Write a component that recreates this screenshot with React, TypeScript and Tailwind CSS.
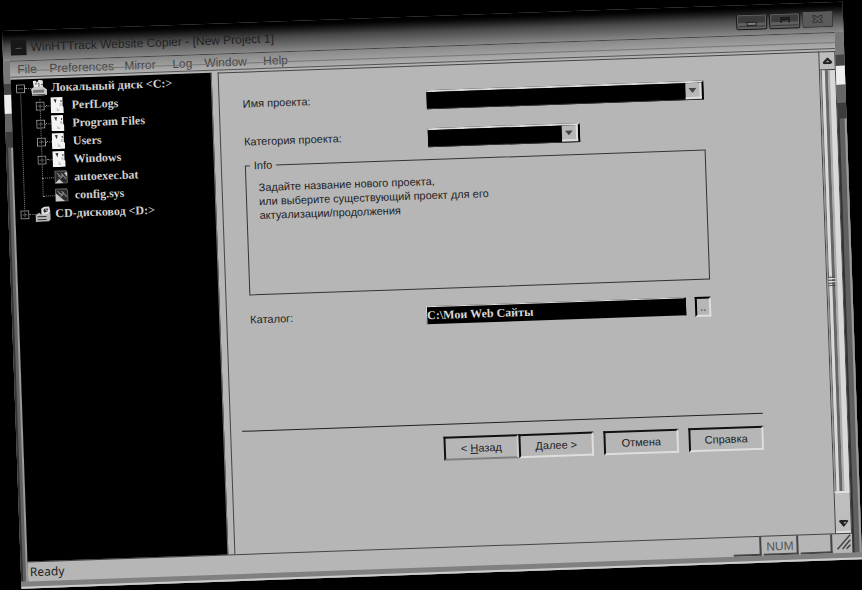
import type { ReactNode } from "react";
import clsx from "clsx";

const MENU = [
  { label: "File", width: "w-8" },
  { label: "Preferences", width: "w-[75px]" },
  { label: "Mirror", width: "w-12" },
  { label: "Log", width: "w-8" },
  { label: "Window", width: "w-[59px]" },
  { label: "Help", width: "w-8" },
];

const FOLDERS = ["PerfLogs", "Program Files", "Users", "Windows"];
const FILES = ["autoexec.bat", "config.sys"];

function Expander({ open = false, label }: { open?: boolean; label: string }) {
  return (
    <button type="button" aria-label={label} className="z-10 flex size-[9px] shrink-0 bg-black">
      <svg viewBox="0 0 9 9" className="size-[9px]" fill="none" stroke="#a0a0a0">
        <rect x=".5" y=".5" width="8" height="8" />
        <path d={open ? "M2 4.5h5" : "M2 4.5h5M4.5 2v5"} stroke="#606060" />
      </svg>
    </button>
  );
}

function DriveIcon({ disc = false }: { disc?: boolean }) {
  return (
    <svg viewBox="0 0 16 16" className="size-4 shrink-0">
      {disc ? (
        <g>
          <path d="M6 6V3l3-2h5l1 5-2 3-7 1z" fill="#ddd" />
          <path d="M8 5 9 3h4l-1 3-3 1z" fill="#333" />
          <path d="m10 4 2 1" stroke="#ccc" />
          <path d="M0 9 4 7l2 2h6l3-2v7l-2 2H0z" fill="#b8b8b8" />
          <path d="M2 11h9M2 14h9" stroke="#333" />
        </g>
      ) : (
        <g>
          <path d="M2 1h3l1 2 2-3 4 1v8H3z" fill="#e6e6e6" />
          <path d="M4 4h2M8 3v5M10 5h2" stroke="#555" />
          <path d="M0 9 3 7h9l4 3v5l-3 1H1z" fill="#c8c8c8" />
          <path d="M2 10h11v3H2z" fill="#777" />
          <path d="M1 15h13" stroke="#444" />
        </g>
      )}
    </svg>
  );
}

function FolderIcon() {
  return (
    <svg viewBox="0 0 13 16" className="h-4 w-[13px] shrink-0">
      <path d="M0 0h12v9l1 1v6H0z" fill="#f4f4f4" />
      <path d="M3 2h3L5 6zM10 3h1v2h-1z" fill="#333" />
      <path d="M9 6h2v3H9zM6 10l3 4H6z" fill="#c4c4c4" />
    </svg>
  );
}

function FileIcon({ config = false }: { config?: boolean }) {
  return (
    <svg viewBox="0 0 14 14" className="size-3.5 shrink-0" fill="none">
      <path d="M1 1h11l1 2v10H1z" fill="#2a2a2a" stroke="#666" />
      <path d={config ? "M1 5v8h9z" : "M1 13l4-4 4 4zM10 3l3 4V2z"} fill="#c8c8c8" />
      <path d="M3 3l5 5M9 4 5 10M7 3l5 6M4 6h5" stroke="#8a8a8a" />
    </svg>
  );
}

function Dots() {
  return <span className="w-1.5 shrink-0 border-t border-dotted border-[#888]" />;
}

function TreePane() {
  return (
    <nav
      aria-label="Disks"
      className="relative w-[201px] shrink-0 border-r border-[#777] bg-black font-['Liberation_Serif','Times_New_Roman',serif] text-xs font-bold text-[#d0d0d0]"
    >
      <span className="absolute top-3 left-[9px] h-32 border-l border-dotted border-[#888]" />
      <span className="absolute top-5 left-7 h-[97px] border-l border-dotted border-[#888]" />
      <ul>
        <li className="flex h-[18px] items-center pl-[5px]">
          <Expander open label="Collapse drive C" />
          <Dots />
          <DriveIcon />
          <span className="pl-1">Локальный диск &lt;C:&gt;</span>
        </li>
        {FOLDERS.map((name) => (
          <li key={name} className="flex h-[18px] items-center pl-6">
            <Expander label={`Expand ${name}`} />
            <Dots />
            <FolderIcon />
            <span className="pl-2">{name}</span>
          </li>
        ))}
        {FILES.map((name) => (
          <li key={name} className="flex h-[18px] items-center pl-7">
            <span className="w-3 border-t border-dotted border-[#888]" />
            <FileIcon config={name === "config.sys"} />
            <span className="pl-1.5">{name}</span>
          </li>
        ))}
        <li className="flex h-[18px] items-center pl-[5px]">
          <Expander label="Expand drive D" />
          <Dots />
          <DriveIcon disc />
          <span className="pl-1">CD-дисковод &lt;D:&gt;</span>
        </li>
      </ul>
    </nav>
  );
}

function Combo({ id, className }: { id: string; className: string }) {
  return (
    <div
      className={clsx(
        "flex h-[19px] border-t-2 border-r-2 border-b border-t-[#d8d8d8] border-r-black border-b-[#333] bg-black",
        className,
      )}
    >
      <div className="relative flex-1">
        <select id={id} className="block h-4 w-full appearance-none bg-black text-[11px] text-[#d0d0d0] outline-none">
          <option></option>
        </select>
        <span className="pointer-events-none absolute top-0 right-0 flex h-4 w-4 items-center justify-center border-r-2 border-b-2 border-[#dedede] bg-[#b8b8b8]">
          <svg viewBox="0 0 8 5" className="h-[5px] w-2">
            <path d="M0 0h8L4 5z" fill="#444" />
          </svg>
        </span>
      </div>
    </div>
  );
}

function WizardButton({ children, focused = false }: { children: ReactNode; focused?: boolean }) {
  return (
    <button
      type="button"
      className={clsx(
        "h-6 w-[75px] border-2 border-t-[#111] border-l-[#111] bg-[#b6b6b6] leading-4",
        focused ? "border-r-[#ccc] border-b-[#808080]" : "border-r-[#dedede] border-b-[#dedede]",
      )}
    >
      {children}
    </button>
  );
}

function WizardForm() {
  return (
    <form className="ml-[11px] w-[521px] pt-6 text-[11px]">
      <div className="pr-12 pl-3">
        <div className="flex h-[38px] items-start justify-between">
          <label htmlFor="project-name" className="leading-[14px]">
            Имя проекта:
          </label>
          <Combo id="project-name" className="w-[277px]" />
        </div>
        <div className="flex h-6 items-start">
          <label htmlFor="project-category" className="w-[184px] leading-[14px]">
            Категория проекта:
          </label>
          <Combo id="project-category" className="w-[152px]" />
        </div>
        <fieldset className="h-[137px] border border-[#333] px-3">
          <legend className="-ml-2 px-1 leading-[14px]">Info</legend>
          <p className="pt-2 leading-[14px]">
            Задайте название нового проекта,
            <br />
            или выберите существующий проект для его
            <br />
            актуализации/продолжения
          </p>
        </fieldset>
        <div className="flex items-start pt-[17px]">
          <label htmlFor="base-path" className="flex-1 leading-[14px]">
            Каталог:
          </label>
          <input
            id="base-path"
            defaultValue="C:\Мои Web Сайты"
            className="h-[18px] w-[260px] border-t border-r-2 border-l border-t-[#e0e0e0] border-r-black border-l-[#e0e0e0] bg-black font-['Liberation_Serif','Times_New_Roman',serif] text-xs font-bold text-[#d8d8d8] outline-none"
          />
          <button
            type="button"
            className="ml-[9px] h-5 w-4 border-2 border-t-black border-r-[#dedede] border-b-[#dedede] border-l-black leading-4"
          >
            ..
          </button>
        </div>
      </div>
      <hr className="mt-[98px] border-[#222]" />
      <div className="flex justify-end gap-2.5 pt-3">
        <div className="flex">
          <WizardButton focused>
            &lt; <u>Н</u>азад
          </WizardButton>
          <WizardButton>
            <u>Д</u>алее &gt;
          </WizardButton>
        </div>
        <WizardButton>Отмена</WizardButton>
        <WizardButton>Справка</WizardButton>
      </div>
    </form>
  );
}

function ScrollBar() {
  return (
    <div className="flex w-[17px] shrink-0 flex-col border-x border-t border-x-[#444] border-t-[#444] bg-[#bebebe]">
      <button type="button" aria-label="Scroll up" className="flex h-[18px] items-center justify-center border-b border-[#333]">
        <svg viewBox="0 0 10 7" className="h-[7px] w-2.5">
          <path d="M5 0 10 5 8 7H1L0 5z" fill="#222" />
          <path d="M5 3 7 5H3z" fill="#999" />
        </svg>
      </button>
      <div className="flex flex-1 items-stretch border-b-2 border-[#e0e0e0]">
        <span className="w-px bg-[#999]" />
        <span className="w-px bg-[#666]" />
        <span className="w-[3px] bg-[#d8d8d8]" />
        <span className="flex w-[3px] items-center bg-[#666]">
          <svg viewBox="0 0 10 10" className="-ml-1 h-2.5 w-2.5 shrink-0" stroke="#444" fill="none">
            <path d="M0 1h10M0 4h10M0 7h10M0 9.500h10" />
            <path d="M0 2.500h10M0 5.500h10" stroke="#ddd" />
          </svg>
        </span>
        <span className="w-0.5 bg-[#aaa]" />
        <span className="flex-1 bg-[#d8d8d8]" />
      </div>
      <button
        type="button"
        aria-label="Scroll down"
        className="flex h-10 items-end justify-center border-b-2 border-[#dedede] pb-1"
      >
        <svg viewBox="0 0 10 7" className="h-[7px] w-2.5">
          <path d="M0 1 2 0h6l2 1-5 6z" fill="#222" />
          <path d="M5 2h3L6 4z" fill="#aaa" />
        </svg>
      </button>
    </div>
  );
}

function CaptionButton({ kind }: { kind: "Minimize" | "Maximize" | "Close" }) {
  return (
    <button
      type="button"
      aria-label={kind}
      className={clsx(
        "flex h-4 w-[31px] items-center justify-center rounded-xs border",
        kind === "Close" ? "border-[#333] border-t-transparent bg-[#5a5a5a]" : "border-[#181818] bg-[#606060]",
      )}
    >
      <svg viewBox="0 0 29 14" className="h-3.5 w-[29px]" fill="none">
        {kind !== "Close" && <path d="M1 1h27v6H1z" fill="#3c3c3c" />}
        {kind !== "Close" && <path d="M1 7.500h27M1 11.500h27" stroke="#383838" />}
        {kind === "Minimize" && <path d="M10 7.500h9v3h-9z" fill="#808080" stroke="#222" />}
        {kind === "Maximize" && <path d="M11 9V4h8v5M12 6h6" stroke="#181818" strokeWidth="1.500" />}
        {kind === "Close" && (
          <path
            d="M10 3h2l2.500 2L17 3h2v2l-2 1.500 2 2V10h-3l-1.500-2L13 10h-3V8.500l2-2L10 5z"
            stroke="#333"
          />
        )}
      </svg>
    </button>
  );
}

function SideFrame({ className }: { className: string }) {
  return (
    <div className={clsx("flex shrink-0 flex-col bg-[#777]", className)}>
      <span className="h-[23px]" />
      <span className="h-[11px] bg-[#444]" />
      <span className="h-[19px] bg-[#eee]" />
      <span className="h-[18px] bg-[#666]" />
      <span className="h-4 bg-[#3c3c3c]" />
      <span className="flex-1 border-x-2 border-l-[#333] border-r-[#999] bg-[#606060]" />
    </div>
  );
}

export default function App() {
  return (
    <div className="flex min-h-screen overflow-hidden bg-black pt-[31px] pr-[19px] pb-px pl-0.5 font-['Liberation_Sans',Arial,sans-serif] text-xs text-[#222]">
      <main className="flex flex-1 origin-top-left -rotate-2 flex-col bg-[#b6b6b6]">
        <header className="flex h-[30px] items-center justify-between bg-linear-to-b from-black via-[#484848] to-[#888] pr-2.5 pl-2">
          <div className="flex items-center gap-1 pt-[3px]">
            <svg viewBox="0 0 16 16" className="size-4">
              <path d="M0 0h16v16H0z" fill="#181818" />
              <path d="M5 9h6" stroke="#555" />
            </svg>
            <h1>WinHTTrack Website Copier - [New Project 1]</h1>
          </div>
          <div className="flex gap-0.5 pt-1">
            <CaptionButton kind="Minimize" />
            <CaptionButton kind="Maximize" />
            <CaptionButton kind="Close" />
          </div>
        </header>

        <div className="flex flex-1">
          <SideFrame className="w-[7px]" />
          <div className="flex flex-1 flex-col">
            <div className="h-[19px] border-t border-[#444] bg-linear-to-b from-[#888] to-[#b6b6b6]">
              <div className="flex h-4 border-b border-[#555] pl-[7px] text-[#444]">
                {MENU.map(({ label, width }) => (
                  <button key={label} type="button" className={clsx("relative text-left leading-[14px]", width)}>
                    {label}
                    <span className="absolute inset-x-0 top-[9px] border-t border-[#777]" />
                  </button>
                ))}
                <span className="mt-[9px] flex-1 border-t border-[#777]" />
              </div>
            </div>

            <div className="flex flex-1">
              <TreePane />
              <section className="ml-1.5 flex-1 border-t border-l border-[#444]">
                <WizardForm />
              </section>
              <ScrollBar />
            </div>

            <footer className="flex h-5 items-stretch border-t border-[#444] leading-[20px]">
              <span className="flex-1 pl-0.5 font-['Noto_Sans',sans-serif]">Ready</span>
              <span className="w-7 border-r-2 border-b-2 border-[#444]" />
              <span className="ml-0.5 w-[35px] border-r-2 border-b-2 border-[#444] text-center text-[#555]">NUM</span>
              <span className="ml-0.5 w-8 border-r-2 border-b-2 border-[#444]" />
              <svg viewBox="0 0 16 16" className="ml-1 size-4" stroke="#444">
                <path d="M1 15 14 1M6 15l8-9M10 15l4-4" strokeWidth="1.500" />
              </svg>
            </footer>
          </div>
          <SideFrame className="w-[9px]" />
        </div>
        <div className="h-[7px] border-b-2 border-[#ccc] bg-[#808080]" />
      </main>
    </div>
  );
}
